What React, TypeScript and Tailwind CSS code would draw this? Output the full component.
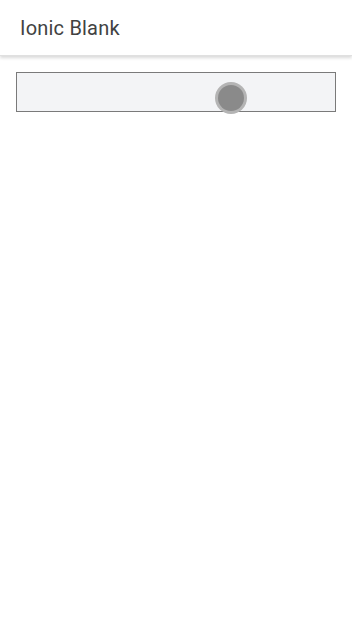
export default function App() {
  return (
    <div className="min-h-[617px] w-full bg-white" style={{ fontFamily: "Roboto, 'Liberation Sans', sans-serif" }}>
      <header className="flex h-14 items-center px-5 shadow-[0_2px_3px_rgba(0,0,0,0.15)] border-b border-[#e0e0e0]">
        <h1 className="text-[20px] font-normal text-[#424242] tracking-[0.01em]">Ionic Blank</h1>
      </header>

      <div className="px-4 pt-4">
        <div className="relative h-10 border border-[#7a7a7a] bg-[#f3f4f6]">
          {/* knob */}
          <div className="absolute left-[198px] top-[9px] flex h-8 w-8 items-center justify-center rounded-full bg-[#b4b4b4]">
            <div className="h-[26px] w-[26px] rounded-full bg-[#8a8a8a]" />
          </div>
        </div>
      </div>
    </div>
  );
}
